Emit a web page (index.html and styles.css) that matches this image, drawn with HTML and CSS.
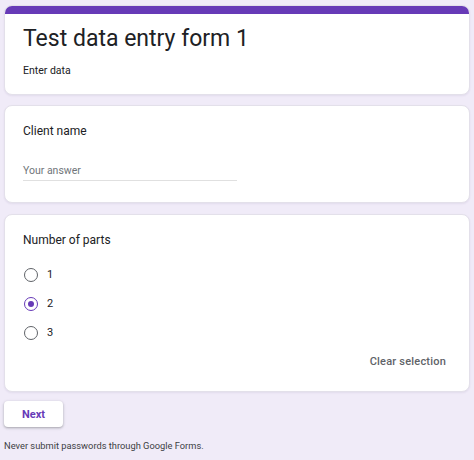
FILE: index.html
```html
<!DOCTYPE html>
<html>
<head>
<meta charset="utf-8">
<link rel="stylesheet" href="styles.css">
</head>
<body>
<main class="form">
  <section class="card header-card">
    <div class="accent"></div>
    <div class="header-body">
      <h1 class="title">Test data entry form 1</h1>
      <p class="desc">Enter data</p>
    </div>
  </section>

  <section class="card question">
    <div class="q-title">Client name</div>
    <div class="text-input">Your answer</div>
  </section>

  <section class="card question">
    <div class="q-title">Number of parts</div>
    <div class="options">
      <label class="option"><span class="radio"></span><span class="opt-label">1</span></label>
      <label class="option"><span class="radio checked"></span><span class="opt-label">2</span></label>
      <label class="option"><span class="radio"></span><span class="opt-label">3</span></label>
    </div>
    <div class="clear-row"><span class="clear">Clear selection</span></div>
  </section>

  <div class="actions"><button class="next">Next</button></div>
  <p class="footer">Never submit passwords through Google Forms.</p>
</main>
</body>
</html>
```

FILE: styles.css
```css
* { box-sizing: border-box; }
html, body { margin: 0; padding: 0; }
body {
  background: #f0ebf8;
  font-family: Roboto, "Noto Sans", sans-serif;
  color: #202124;
}
.form {
  padding: 5px 4px 0 4px;
  display: flex;
  flex-direction: column;
}
.card {
  background: #fff;
  border: 1px solid #e3e0ea;
  border-radius: 8px;
  box-shadow: 0 1px 2px rgba(60, 40, 100, 0.08);
}
.header-card {
  overflow: hidden;
  height: 90px;
}
.accent {
  height: 8px;
  background: #673ab7;
}
.header-body {
  padding: 11px 18px 0 18px;
}
.title {
  margin: 0;
  font-size: 23px;
  line-height: 28px;
  font-weight: 400;
  color: #202124;
}
.desc {
  margin: 10px 0 0 0;
  font-size: 10.5px;
  line-height: 16px;
  color: #202124;
}
.question {
  margin-top: 10px;
  padding: 17px 18px 0 18px;
}
.question:nth-of-type(2) { height: 98px; }
.question:nth-of-type(3) { height: 178px; margin-top: 11px; }
.q-title {
  font-size: 12px;
  line-height: 16px;
  color: #202124;
}
.text-input {
  margin-top: 24px;
  width: 214px;
  font-size: 10.5px;
  line-height: 16px;
  color: #70757a;
  padding-bottom: 1px;
  border-bottom: 1px solid #e0e0e0;
}
.options {
  margin-top: 12px;
  display: flex;
  flex-direction: column;
}
.option {
  height: 29px;
  display: flex;
  align-items: center;
  gap: 9px;
  padding-left: 1px;
}
.radio {
  width: 14px;
  height: 14px;
  border: 1.6px solid #5f6368;
  border-radius: 50%;
  display: flex;
  align-items: center;
  justify-content: center;
}
.radio.checked {
  border-color: #673ab7;
}
.radio.checked::after {
  content: "";
  width: 6px;
  height: 6px;
  border-radius: 50%;
  background: #673ab7;
}
.opt-label {
  font-size: 11px;
  color: #202124;
}
.clear-row {
  display: flex;
  justify-content: flex-end;
  margin-top: 7px;
  padding-right: 5px;
}
.clear {
  font-size: 11px;
  line-height: 16px;
  font-weight: 500;
  color: #5f6368;
  letter-spacing: 0.2px;
}
.actions {
  margin-top: 9px;
  display: flex;
}
.next {
  width: 59px;
  height: 26px;
  background: #fff;
  border: none;
  border-radius: 4px;
  box-shadow: 0 1px 2px rgba(60, 64, 67, 0.3), 0 1px 3px 1px rgba(60, 64, 67, 0.1);
  font-family: Roboto, sans-serif;
  font-size: 11px;
  font-weight: 700;
  color: #673ab7;
  padding: 0;
}
.footer {
  margin: 12px 0 0 0;
  font-size: 9.3px;
  line-height: 14px;
  color: #3c4043;
}
```
